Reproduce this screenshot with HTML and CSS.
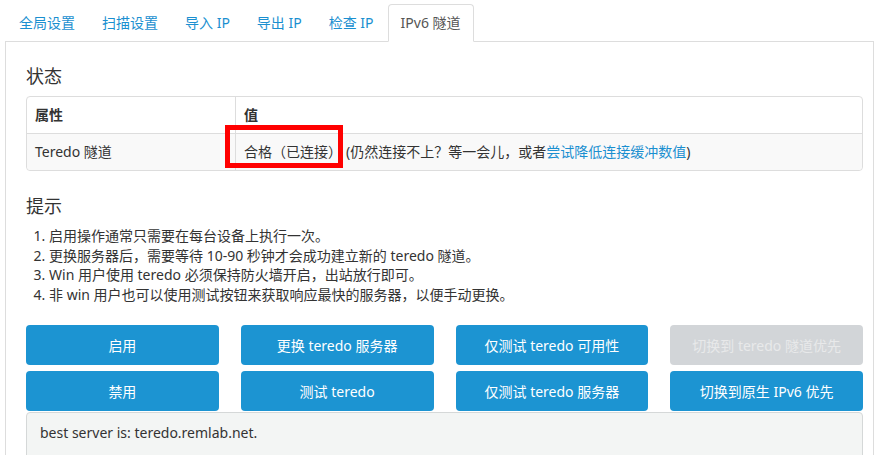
FILE: index.html
```html
<!DOCTYPE html>
<html lang="zh-CN">
<head>
  <meta charset="UTF-8" />
  <title>IPv6 隧道</title>
  <link rel="stylesheet" href="styles.css">
</head>
<body>

  <ul class="tabs">
    <li><a href="#">全局设置</a></li>
    <li><a href="#">扫描设置</a></li>
    <li><a href="#">导入 IP</a></li>
    <li><a href="#">导出 IP</a></li>
    <li><a href="#">检查 IP</a></li>
    <li class="active"><a href="#">IPv6 隧道</a></li>
  </ul>

  <div class="panel">
    <h3>状态</h3>
    <table class="status">
      <thead>
        <tr>
          <th class="col-attr">属性</th>
          <th>值</th>
        </tr>
      </thead>
      <tbody>
        <tr>
          <td>Teredo 隧道</td>
          <td><span class="mark">合格（已连接）</span>(仍然连接不上？等一会儿，或者<a href="#">尝试降低连接缓冲数值</a>)</td>
        </tr>
      </tbody>
    </table>

    <h3>提示</h3>
    <ol class="tips">
      <li>启用操作通常只需要在每台设备上执行一次。</li>
      <li>更换服务器后，需要等待 10-90 秒钟才会成功建立新的 teredo 隧道。</li>
      <li>Win 用户使用 teredo 必须保持防火墙开启，出站放行即可。</li>
      <li>非 win 用户也可以使用测试按钮来获取响应最快的服务器，以便手动更换。</li>
    </ol>

    <div class="actions">
      <button>启用</button>
      <button>更换 teredo 服务器</button>
      <button>仅测试 teredo 可用性</button>
      <button disabled>切换到 teredo 隧道优先</button>
      <button>禁用</button>
      <button>测试 teredo</button>
      <button>仅测试 teredo 服务器</button>
      <button>切换到原生 IPv6 优先</button>
    </div>

    <div class="output">best server is: teredo.remlab.net.</div>
  </div>

</body>
</html>
```

FILE: styles.css
```css
body {
  margin: 0;
  padding: 4px 0 0 5px;
  font-family: "Noto Sans", "Noto Sans CJK SC", sans-serif;
  font-size: 14px;
  line-height: 20px;
  color: #333;
  background: #fff;
}

a {
  color: #1a8fd0;
  text-decoration: none;
}

/* Abas */
.tabs {
  display: flex;
  list-style: none;
  margin: 0;
  padding: 0 0 0 1px;
  border-bottom: 1px solid #ddd;
}

.tabs li {
  margin-right: 1px;
  margin-bottom: -1px;
}

.tabs a {
  display: block;
  padding: 8px 12px;
  border: 1px solid transparent;
  border-radius: 4px 4px 0 0;
}

.tabs .active a {
  color: #555;
  background: #fff;
  border-color: #ddd #ddd #fff;
}

.panel {
  border: 1px solid #ddd;
  border-top: none;
  padding: 24px 10px 0 20px;
}

.panel h3 {
  font-size: 18px;
  font-weight: normal;
  line-height: 20px;
  margin: 0 0 10px;
  color: #333;
}

/* Tabela de estado */
.status {
  width: 100%;
  border-collapse: separate;
  border-spacing: 0;
  border: 1px solid #ddd;
  border-radius: 4px;
  margin-bottom: 25px;
}

.status th,
.status td {
  text-align: left;
  padding: 8px;
  line-height: 20px;
}

.status th {
  font-weight: bold;
  border-bottom: 1px solid #ddd;
}

.status th + th,
.status td + td {
  border-left: 1px solid #ddd;
}

.status .col-attr {
  width: 192px;
}

.status tbody td {
  background: #f9f9f9;
}

.status tbody tr td:first-child {
  border-bottom-left-radius: 4px;
}

.status tbody tr td:last-child {
  border-bottom-right-radius: 4px;
}

/* Moldura vermelha por cima do valor */
.mark {
  position: relative;
  margin-right: 4px;
}

.mark::after {
  content: "";
  position: absolute;
  left: -19px;
  right: -1px;
  top: -17px;
  bottom: -7px;
  border: 5px solid #f00;
}

.tips {
  margin: 6px 0 20px;
  padding-left: 23px;
  line-height: 19.7px;
  color: #333;
}

/* Botões */
.actions {
  display: grid;
  grid-template-columns: repeat(4, 1fr);
  column-gap: 22px;
  row-gap: 6px;
}

.actions button {
  height: 40px;
  border: none;
  border-radius: 4px;
  background-color: #1c94d2;
  color: #fff;
  font-family: inherit;
  font-size: 14px;
  cursor: pointer;
}

.actions button:disabled {
  background-color: #d2d5d8;
  color: #e8e9ea;
  cursor: default;
}

.output {
  margin-top: 1px;
  min-height: 80px;
  padding: 10px 13px;
  background: #f3f5f4;
  border: 1px solid #d5d8d8;
  border-radius: 4px;
}
```
